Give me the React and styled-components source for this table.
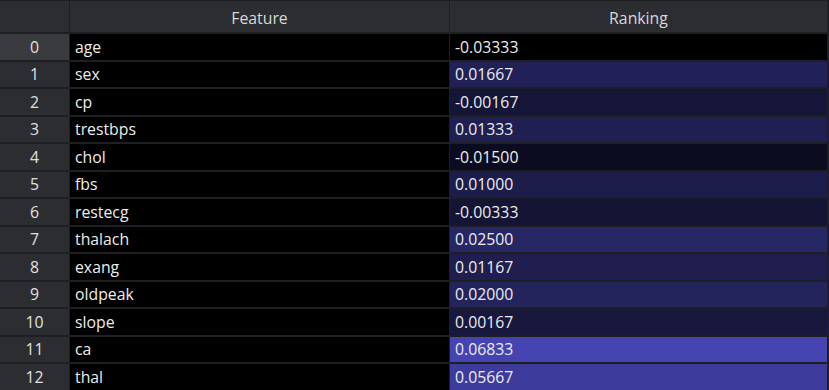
import React from 'react';
import styled, { createGlobalStyle } from 'styled-components';

const rows = [
  ['age', -0.03333],
  ['sex', 0.01667],
  ['cp', -0.00167],
  ['trestbps', 0.01333],
  ['chol', -0.015],
  ['fbs', 0.01],
  ['restecg', -0.00333],
  ['thalach', 0.025],
  ['exang', 0.01167],
  ['oldpeak', 0.02],
  ['slope', 0.00167],
  ['ca', 0.06833],
  ['thal', 0.05667],
];

const minV = Math.min(...rows.map((r) => r[1]));
const maxV = Math.max(...rows.map((r) => r[1]));
const top = [69, 68, 176];

function shade(v) {
  const t = (v - minV) / (maxV - minV);
  const [r, g, b] = top.map((c) => Math.round(c * t));
  return `rgb(${r}, ${g}, ${b})`;
}

const GlobalStyle = createGlobalStyle`
  html, body {
    margin: 0;
    padding: 0;
    background: #1e1f22;
  }
  body {
    font-family: "Open Sans", "Liberation Sans", sans-serif;
  }
`;

const Grid = styled.div`
  display: grid;
  grid-template-columns: 69px 379px 377px;
  grid-template-rows: 31px;
  grid-auto-rows: 25.5px;
  column-gap: 1px;
  row-gap: 2px;
  width: 829px;
  height: 390px;
  padding-top: 1px;
  box-sizing: border-box;
  background: #1e1f22;
  overflow: hidden;
  font-size: 15.8px;
  color: #ececec;
`;

const HeadCell = styled.div`
  background: #2c2d31;
  display: flex;
  align-items: center;
  justify-content: center;
  padding-top: 2px;
  color: #d8d8d8;
`;

const IndexCell = styled.div`
  background: ${(p) => (p.$active ? '#3a3b3f' : '#2c2d31')};
  display: flex;
  align-items: center;
  justify-content: center;
  color: #e0e0e0;
`;

const Cell = styled.div`
  background: #000;
  display: flex;
  align-items: center;
  padding-left: 5px;
  white-space: nowrap;
`;

export default function App() {
  return (
    <>
      <GlobalStyle />
      <Grid>
        <HeadCell />
        <HeadCell>Feature</HeadCell>
        <HeadCell>Ranking</HeadCell>
        {rows.map(([name, v], i) => (
          <React.Fragment key={name}>
            <IndexCell $active={i === 0}>{i}</IndexCell>
            <Cell>{name}</Cell>
            <Cell style={{ background: shade(v) }}>{v.toFixed(5)}</Cell>
          </React.Fragment>
        ))}
      </Grid>
    </>
  );
}
